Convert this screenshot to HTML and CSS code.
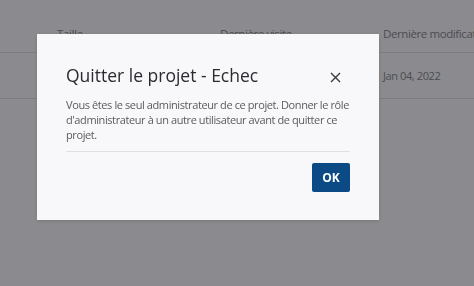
FILE: index.html
```html
<!DOCTYPE html>
<html lang="fr">
<head>
<meta charset="utf-8">
<link rel="stylesheet" href="styles.css">
</head>
<body>
<div class="page">
  <div class="table">
    <div class="row head">
      <div class="cell c1">Taille</div>
      <div class="cell c2">Dernière visite</div>
      <div class="cell c3">Dernière modification</div>
    </div>
    <div class="row">
      <div class="cell c1"></div>
      <div class="cell c2"></div>
      <div class="cell c3">Jan 04, 2022</div>
    </div>
  </div>
</div>
<div class="overlay">
  <div class="dialog">
    <div class="dialog-head">
      <h2 class="title">Quitter le projet - Echec</h2>
      <button class="close" aria-label="Fermer">
        <svg width="11" height="11" viewBox="0 0 11 11"><path d="M1 1L10 10M10 1L1 10" stroke="#3a3a3e" stroke-width="1.4" fill="none"/></svg>
      </button>
    </div>
    <p class="msg">Vous êtes le seul administrateur de ce projet. Donner le rôle d'administrateur à un autre utilisateur avant de quitter ce projet.</p>
    <div class="divider"></div>
    <div class="actions">
      <button class="ok">OK</button>
    </div>
  </div>
</div>
</body>
</html>
```
FILE: styles.css
```css
* { box-sizing: border-box; }
html, body { margin: 0; padding: 0; }
body {
  width: 474px; height: 286px; overflow: hidden;
  background: #fff;
  font-family: "Open Sans", "Noto Sans", sans-serif;
}
.page { width: 474px; height: 286px; overflow: hidden; }
.table { padding-top: 15px; width: 474px; }
.row {
  display: flex; align-items: center;
  border-bottom: 1px solid #e4e4e6;
  height: 46px;
  font-size: 11px; letter-spacing: -0.4px; color: #8c8c90;
  white-space: nowrap;
}
.row.head { height: 38px; font-size: 11.5px; }
.cell { flex-shrink: 0; }
.cell.c1 { margin-left: 57px; width: 163px; }
.cell.c2 { width: 163px; }
.overlay {
  position: fixed; inset: 0;
  background: rgba(0, 0, 8, 0.455);
}
.dialog {
  position: absolute; left: 37px; top: 34px;
  width: 342px; height: 186px;
  background: #f8f8fa;
  box-shadow: 0 1px 4px rgba(0,0,0,0.15);
  padding: 24px 29px 0 29px;
  display: flex; flex-direction: column;
}
.dialog-head { display: flex; align-items: center; justify-content: space-between; height: 34px; }
.title {
  margin: 0; font-size: 17.5px; font-weight: 500; color: #2a2a30; letter-spacing: 0;
}
.close {
  border: 0; background: none; padding: 0; margin-right: 9px; margin-top: 4px;
  width: 11px; height: 11px; display: flex;
}
.msg {
  margin: 5px -2px 0 0; font-size: 11px; letter-spacing: -0.4px; line-height: 15px; color: #5a5a60;
}
.divider { height: 1px; background: #e0e0e4; margin-top: 9px; }
.actions { display: flex; justify-content: flex-end; margin-top: 11px; }
.ok {
  width: 38px; height: 29px; border: 0; border-radius: 2px;
  background: #0b4a85; color: #fff;
  font-family: "Open Sans", sans-serif; font-weight: 700; font-size: 12px;
}
```
